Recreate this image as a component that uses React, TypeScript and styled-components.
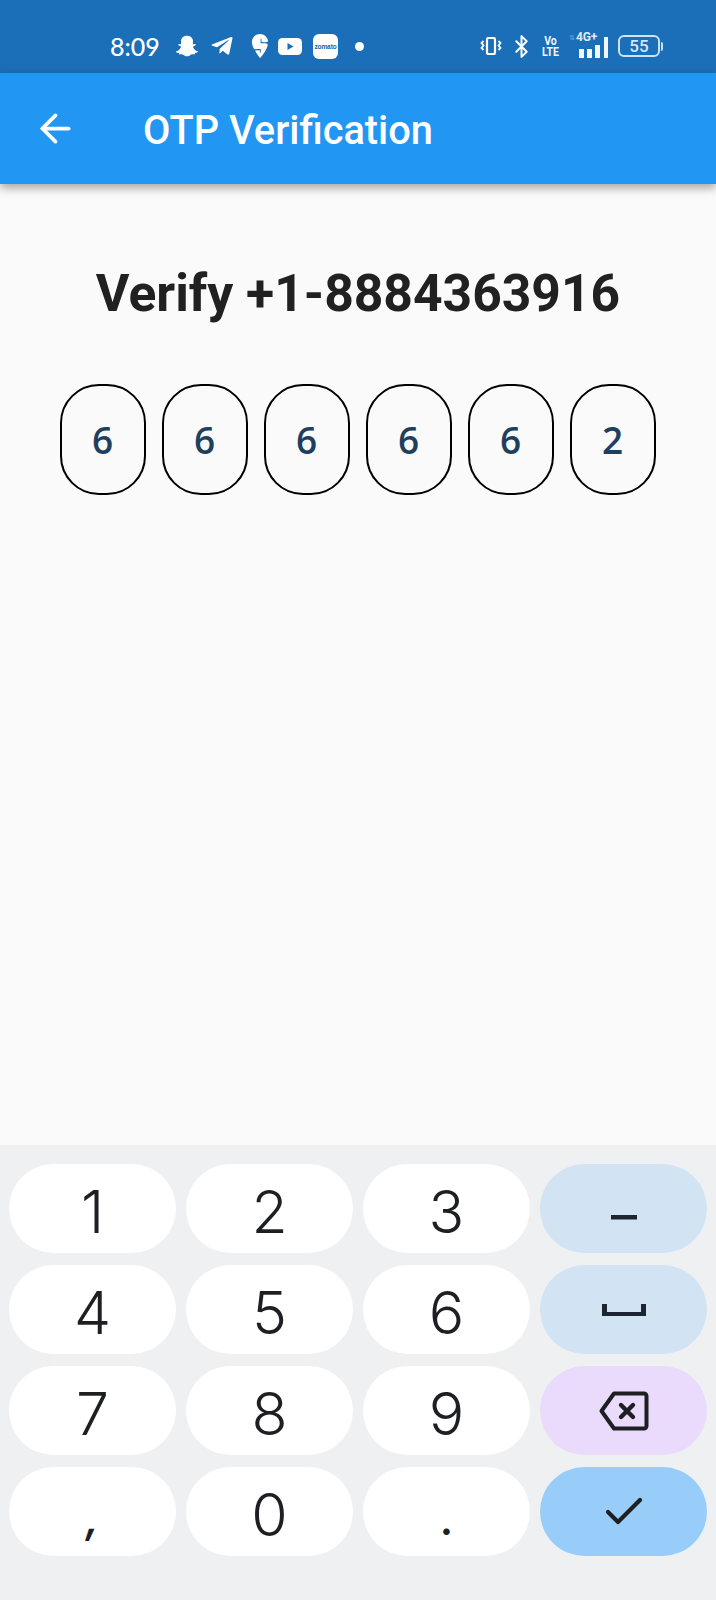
import React from "react";
import styled, { createGlobalStyle } from "styled-components";
import { FaSnapchatGhost, FaTelegramPlane } from "react-icons/fa";
import { SiSwiggy } from "react-icons/si";
import { ArrowLeft, Bluetooth, Check } from "lucide-react";

const Global = createGlobalStyle`
  html, body { margin: 0; padding: 0; }
  body { width: 716px; height: 1600px; overflow: hidden; background: #fafafa; }
  * { box-sizing: border-box; }
`;

const Page = styled.div`
  width: 716px;
  height: 1600px;
  display: flex;
  flex-direction: column;
  background: #fafafa;
`;

const StatusBar = styled.div`
  height: 73px;
  flex: none;
  background: #1a6fb8;
  color: #fff;
  display: flex;
  align-items: center;
  justify-content: space-between;
  padding: 19px 53px 0 110px;
`;

const StatusGroup = styled.div`
  display: flex;
  align-items: center;
`;

const Time = styled.span`
  font: 500 25px/1 Lato, sans-serif;
  width: 66px;
`;

const Slot = styled.span<{ $w: number }>`
  width: ${(p) => p.$w}px;
  display: flex;
  align-items: center;
  flex: none;
`;

const Zomato = styled.span`
  width: 25px;
  height: 25px;
  border-radius: 6px;
  background: #fff;
  color: #1a5f9f;
  font: 700 6.5px/25px "Liberation Sans", sans-serif;
  text-align: center;
  letter-spacing: -0.1px;
`;

const Dot = styled.span`
  width: 9px;
  height: 9px;
  border-radius: 50%;
  background: #fff;
`;

const Volte = styled.span`
  font: 700 10.5px/9px Roboto, sans-serif;
  text-align: center;
  width: 17px;
  color: #f1f6fb;
  white-space: pre-line;
  transform: scaleY(1.22);
`;

const Signal = styled.span`
  display: flex;
  flex-direction: column;
  width: 40px;
  height: 24px;
  position: relative;
`;

const FourG = styled.span`
  font: 700 12px/12px Roboto, sans-serif;
  color: #dfecf7;
  padding-left: 7px;
  margin-top: -3px;
  display: flex;
  align-items: center;
  gap: 1px;
  letter-spacing: -0.2px;
`;

const Faint = styled.span`
  position: absolute;
  left: 0;
  top: 0;
  width: 5px;
  height: 9px;
  color: #6fa6d6;
  font: 400 7px/9px "DejaVu Sans", sans-serif;
`;

const Bars = styled.span`
  display: flex;
  align-items: flex-end;
  gap: 3px;
  padding-left: 10px;
  height: 15px;
`;

const SigBar = styled.span<{ $h: number }>`
  width: 5px;
  height: ${(p) => p.$h}px;
  background: #f1f6fb;
  flex: none;
`;

const TallBar = styled.span`
  position: absolute;
  right: 1px;
  bottom: 0;
  width: 4px;
  height: 21px;
  background: #f1f6fb;
`;

const Battery = styled.span`
  width: 42px;
  height: 22px;
  border: 2px solid #cfe2f3;
  border-radius: 6px;
  font: 500 17px/18px Roboto, sans-serif;
  color: #d6e7f5;
  text-align: center;
`;

const BatteryNub = styled.span`
  width: 2px;
  height: 9px;
  margin-left: 1px;
  background: #cfe2f3;
  border-radius: 0 2px 2px 0;
`;

const AppBar = styled.header`
  height: 111px;
  flex: none;
  background: #2196f3;
  color: #fff;
  display: flex;
  align-items: center;
  padding: 0 0 0 33px;
  box-shadow: 0 4px 9px rgba(0, 0, 0, 0.34);
  position: relative;
`;

const Title = styled.h1`
  margin: 5px 0 0 65px;
  font: 500 39.8px/1 Roboto, sans-serif;
`;

const Body = styled.main`
  flex: 1;
  display: flex;
  flex-direction: column;
  align-items: center;
  padding-top: 82px;
`;

const Heading = styled.h2`
  margin: 0 0 62px;
  font: 700 51.6px/56px Roboto, sans-serif;
  color: #212121;
`;

const OtpRow = styled.div`
  display: flex;
  gap: 16px;
`;

const OtpCell = styled.div`
  width: 86px;
  height: 111px;
  border: 2px solid #000;
  border-radius: 39px;
  display: flex;
  align-items: center;
  justify-content: center;
  padding-right: 1px;
  font: 600 37px/1 "Open Sans", sans-serif;
  color: #1f3f5f;
`;

const Keyboard = styled.section`
  flex: none;
  height: 455px;
  background: #eff0f2;
  padding: 19px 9px 44px;
  display: grid;
  grid-template-columns: repeat(4, 167px);
  grid-auto-rows: 89px;
  column-gap: 10px;
  row-gap: 12px;
`;

const Key = styled.div<{ $bg?: string }>`
  background: ${(p) => p.$bg ?? "#fff"};
  border-radius: 45px;
  display: flex;
  align-items: center;
  justify-content: center;
  color: #1d1f22;
`;

const Digit = styled.span`
  font: 350 59px/1 Inter, sans-serif;
  padding-top: 6px;
`;

const Punct = styled.span<{ $slant?: boolean }>`
  font: ${(p) => (p.$slant ? "italic" : "normal")} 600 42px/1 Inter, sans-serif;
  padding-top: ${(p) => (p.$slant ? 13 : 17)}px;
`;

const MinusGlyph = styled.svg`
  margin-top: 18px;
`;

const Vibrate = () => (
  <svg width="22" height="18" viewBox="0 0 22 18" fill="none" stroke="#fff" strokeWidth="2.2">
    <rect x="7" y="1" width="8" height="16" rx="1.5" />
    <path d="M3.5 4l-2 2 2 2.5-2 2.5 2 2M18.5 4l2 2-2 2.5 2 2.5-2 2" strokeWidth="1.8" />
  </svg>
);

const YouTube = () => (
  <svg width="24" height="17" viewBox="0 0 24 17">
    <rect width="24" height="17" rx="4.5" fill="#fff" />
    <path d="M9.5 5l6 3.5-6 3.5z" fill="#1a6fb8" />
  </svg>
);

const MinusIcon = () => (
  <MinusGlyph width="26" height="5" viewBox="0 0 26 5"><rect width="26" height="4.5" fill="#1d2530" /></MinusGlyph>
);

const SpaceIcon = () => (
  <svg width="44" height="12" viewBox="0 0 44 12"><path d="M0 0h5v8h34V0h5v12H0z" fill="#1d2530" /></svg>
);

const BackspaceIcon = () => (
  <svg width="50" height="40" viewBox="0 0 50 40" fill="none" stroke="#1d1f22" strokeWidth="4" strokeLinejoin="round" strokeLinecap="round">
    <path d="M15 2.5H45a2.5 2.5 0 0 1 2.5 2.5V35a2.5 2.5 0 0 1-2.5 2.5H15L2.5 20z" />
    <path d="M22 14l12 12M34 14L22 26" strokeWidth="4.4" />
  </svg>
);

const digits = ["1", "2", "3", "4", "5", "6", "7", "8", "9"];

export default function App() {
  return (
    <Page>
      <Global />
      <StatusBar>
        <StatusGroup>
          <Time>8:09</Time>
          <Slot $w={34}><FaSnapchatGhost size={22} /></Slot>
          <Slot $w={38}><FaTelegramPlane size={24} /></Slot>
          <Slot $w={30}><SiSwiggy size={24} /></Slot>
          <Slot $w={35}><YouTube /></Slot>
          <Slot $w={42}><Zomato>zomato</Zomato></Slot>
          <Dot />
        </StatusGroup>
        <StatusGroup>
          <Slot $w={29}><Vibrate /></Slot>
          <Slot $w={33}><Bluetooth size={25} strokeWidth={1.9} /></Slot>
          <Slot $w={27}><Volte>{"Vo\nLTE"}</Volte></Slot>
          <Slot $w={49}>
            <Signal>
              <Faint>⇅</Faint>
              <FourG>4G+</FourG>
              <Bars>
                <SigBar $h={9} />
                <SigBar $h={9} />
                <SigBar $h={13} />
              </Bars>
              <TallBar />
            </Signal>
          </Slot>
          <Battery>55</Battery>
          <BatteryNub />
        </StatusGroup>
      </StatusBar>
      <AppBar>
        <ArrowLeft size={45} strokeWidth={2} />
        <Title>OTP Verification</Title>
      </AppBar>
      <Body>
        <Heading>Verify +1-8884363916</Heading>
        <OtpRow>
          {["6", "6", "6", "6", "6", "2"].map((d, i) => (
            <OtpCell key={i}>{d}</OtpCell>
          ))}
        </OtpRow>
      </Body>
      <Keyboard>
        {digits.slice(0, 3).map((d) => <Key key={d}><Digit>{d}</Digit></Key>)}
        <Key $bg="#d2e3f4"><MinusIcon /></Key>
        {digits.slice(3, 6).map((d) => <Key key={d}><Digit>{d}</Digit></Key>)}
        <Key $bg="#d2e3f4"><SpaceIcon /></Key>
        {digits.slice(6, 9).map((d) => <Key key={d}><Digit>{d}</Digit></Key>)}
        <Key $bg="#eadbfd"><BackspaceIcon /></Key>
        <Key><Punct $slant>,</Punct></Key>
        <Key><Digit>0</Digit></Key>
        <Key><Punct>.</Punct></Key>
        <Key $bg="#98cdf9"><Check size={48} strokeWidth={2.1} /></Key>
      </Keyboard>
    </Page>
  );
}
